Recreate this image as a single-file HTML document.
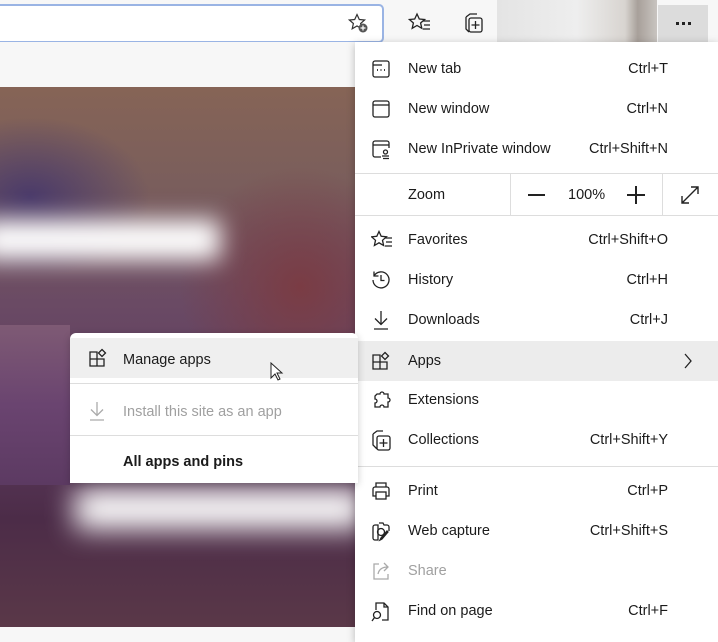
<!DOCTYPE html>
<html><head><meta charset="utf-8"><style>
*{margin:0;padding:0;box-sizing:border-box}
body{width:718px;height:627px;overflow:hidden;position:relative;background:#f7f7f7;font-family:"Liberation Sans",sans-serif;font-size:14.5px;color:#1b1b1b}
.abs{position:absolute}
.bg{left:0;top:87px;width:360px;height:540px;overflow:hidden;background:
radial-gradient(ellipse 120px 80px at 30px 110px,#4a3a6a,rgba(74,58,106,0)),
radial-gradient(ellipse 120px 120px at 300px 200px,#7a3c44,rgba(122,60,68,0)),
linear-gradient(180deg,#866456 0%,#7a5e5c 18%,#6a4a64 40%,#5e3c60 60%,#4c2c48 80%,#5a3848 100%)}
.blur{position:absolute;background:#fff;filter:blur(12px)}
.menu{left:355px;top:42px;width:363px;height:600px;background:#fff;box-shadow:0 2px 8px rgba(0,0,0,.25)}
.row{position:absolute;left:0;width:363px;height:40px;line-height:41px}
.row .t{position:absolute;left:53px}
.row .k{position:absolute;right:50px}
.row svg{position:absolute;left:16px;top:10px}
.hr{position:absolute;left:0;width:363px;height:1px;background:#ddd}
.sub{left:70px;top:333px;width:288px;height:150px;background:#fff;border-radius:6px 6px 0 0;box-shadow:0 2px 8px rgba(0,0,0,.2)}
</style></head><body>
<div class="abs" style="left:0;top:0;width:718px;height:42px;background:#f7f7f7"></div>
<div class="abs" style="left:-10px;top:4px;width:394px;height:39px;background:#fff;border:2px solid #9ab4e4;border-radius:5px"></div>
<svg class="abs" style="left:348px;top:13px" width="24" height="22" viewBox="0 0 24 22" fill="none" stroke="#333" stroke-width="1.2"><path d="M9 1.5l2.3 5 5.3.5-4 3.5 1.2 5.3L9 13l-4.8 2.8 1.2-5.3-4-3.5 5.3-.5z"/><circle cx="15" cy="15" r="4.5" fill="#555" stroke="none"/><path d="M15 12.5v5M12.5 15h5" stroke="#fff"/></svg>
<svg class="abs" style="left:408px;top:12px" width="24" height="22" viewBox="0 0 24 22" fill="none" stroke="#222" stroke-width="1.3"><path d="M9 2l2.3 5 5.3.5-4 3.5 1.2 5.3L9 13.5l-4.8 2.8 1.2-5.3-4-3.5 5.3-.5z"/><path d="M15 9h7M16 13h6M15 17h7"/></svg>
<svg class="abs" style="left:463px;top:12px" width="24" height="24" viewBox="0 0 24 24" fill="none" stroke="#222" stroke-width="1.3"><rect x="6" y="6" width="13" height="14" rx="2"/><path d="M3 5v12l3 3M3 5l4-3h7"/><path d="M12.5 9v8M8.5 13h8"/></svg>
<div class="abs" style="left:497px;top:0;width:160px;height:46px;background:linear-gradient(90deg,#e4e4e4,#eee 50%,#d8d4d0 80%,#a8a09a 88%,#c8c4c0)"></div>
<div class="abs" style="left:658px;top:5px;width:50px;height:37px;background:#dcdcdc"></div>
<div class="abs" style="left:676px;top:22px;width:3px;height:3px;background:#222"></div>
<div class="abs" style="left:682px;top:22px;width:3px;height:3px;background:#222"></div>
<div class="abs" style="left:688px;top:22px;width:3px;height:3px;background:#222"></div>
<div class="abs" style="left:0;top:42px;width:360px;height:45px;background:#f7f7f7"></div>
<div class="abs bg">
<div class="blur" style="left:-20px;top:133px;width:240px;height:40px"></div>
<div class="blur" style="left:75px;top:402px;width:290px;height:40px;filter:blur(14px)"></div>
</div>
<div class="abs" style="left:0;top:325px;width:70px;height:160px;background:linear-gradient(180deg,#7e5a74,#6a4470 50%,#5c3a62)"></div>

<div class="abs menu">
<div class="row" style="top:7px"><svg width="20" height="20" viewBox="0 0 20 20" fill="none" stroke="#222" stroke-width="1.3"><rect x="2" y="2" width="16" height="16" rx="2"/><path d="M2 6h9"/><path d="M6 11h1M9.5 11h1M13 11h1" stroke-width="1.8"/></svg><span class="t">New tab</span><span class="k">Ctrl+T</span></div>
<div class="row" style="top:47px"><svg width="20" height="20" viewBox="0 0 20 20" fill="none" stroke="#222" stroke-width="1.3"><rect x="2" y="2" width="16" height="16" rx="2"/><path d="M2 6h16"/></svg><span class="t">New window</span><span class="k">Ctrl+N</span></div>
<div class="row" style="top:87px"><svg width="20" height="22" viewBox="0 0 20 22" fill="none" stroke="#222" stroke-width="1.3"><path d="M10 18H4a2 2 0 0 1-2-2V4a2 2 0 0 1 2-2h12a2 2 0 0 1 2 2v5"/><path d="M2 6h16"/><circle cx="14.5" cy="13" r="2"/><path d="M11 17h7M12 19.5h6"/></svg><span class="t">New InPrivate window</span><span class="k">Ctrl+Shift+N</span></div>
<div class="hr" style="top:131px"></div>
<div class="row" style="top:132px;height:41px;line-height:42px"><span class="t">Zoom</span>
<div class="abs" style="left:155px;top:0;width:1px;height:41px;background:#ddd"></div>
<div class="abs" style="left:173px;top:20px;width:17px;height:1.5px;background:#222"></div>
<span class="abs" style="left:213px">100%</span>
<div class="abs" style="left:272px;top:20px;width:18px;height:1.5px;background:#222"></div>
<div class="abs" style="left:280px;top:12px;width:1.5px;height:18px;background:#222"></div>
<div class="abs" style="left:307px;top:0;width:1px;height:41px;background:#ddd"></div>
<svg class="abs" style="left:325px;top:11px" width="20" height="20" viewBox="0 0 20 20" fill="none" stroke="#222" stroke-width="1.4"><path d="M2 18L18 2M11 2h7v7M2 11v7h7"/></svg></div>
<div class="hr" style="top:173px"></div>
<div class="row" style="top:178px"><svg width="22" height="20" viewBox="0 0 22 20" fill="none" stroke="#222" stroke-width="1.3"><path d="M8 1.5l2.2 4.8 5.2.5-3.9 3.5 1.1 5.2L8 12.8l-4.6 2.7 1.1-5.2L.6 6.8l5.2-.5z"/><path d="M14 8h7M15 12h6M14 16h7"/></svg><span class="t">Favorites</span><span class="k">Ctrl+Shift+O</span></div>
<div class="row" style="top:218px"><svg width="20" height="20" viewBox="0 0 20 20" fill="none" stroke="#222" stroke-width="1.3"><path d="M3 6A8 8 0 1 1 2 10"/><path d="M3 1.5V6h4.5"/><path d="M10 5v5.5h3.5"/></svg><span class="t">History</span><span class="k">Ctrl+H</span></div>
<div class="row" style="top:258px"><svg width="20" height="20" viewBox="0 0 20 20" fill="none" stroke="#222" stroke-width="1.3"><path d="M10 1v13M4 8.5l6 6 6-6M3 19h14"/></svg><span class="t">Downloads</span><span class="k">Ctrl+J</span></div>
<div class="row" style="top:299px;background:#ececec"><svg width="20" height="20" viewBox="0 0 20 20" fill="none" stroke="#222" stroke-width="1.3"><path d="M2 4h7v14H2zM2 11h14v7H9"/><path d="M14 1.5l3.5 3.5-3.5 3.5-3.5-3.5z"/></svg><span class="t">Apps</span><svg style="left:328px;top:12px" width="10" height="16" viewBox="0 0 10 16" fill="none" stroke="#222" stroke-width="1.3"><path d="M2 1l6 7-6 7"/></svg></div>
<div class="row" style="top:338px"><svg width="20" height="22" viewBox="0 0 20 22" fill="none" stroke="#222" stroke-width="1.3"><path d="M6 4h3a2 2 0 1 1 4 0h4v4a2 2 0 1 1 0 4v5h-4a2 2 0 1 0-4 0H4v-4a2 2 0 1 0 0-4V6z"/></svg><span class="t">Extensions</span></div>
<div class="row" style="top:378px"><svg width="22" height="22" viewBox="0 0 22 22" fill="none" stroke="#222" stroke-width="1.3"><rect x="6" y="6" width="13" height="14" rx="2"/><path d="M2 4v11l4 4M2 4l4-3h6"/><path d="M12.5 9v8M8.5 13h8"/></svg><span class="t">Collections</span><span class="k">Ctrl+Shift+Y</span></div>
<div class="hr" style="top:424px"></div>
<div class="row" style="top:429px"><svg width="20" height="20" viewBox="0 0 20 20" fill="none" stroke="#222" stroke-width="1.3"><path d="M5 6V2h10v4M5 15H2V8a2 2 0 0 1 2-2h12a2 2 0 0 1 2 2v7h-3"/><rect x="5" y="11" width="10" height="7"/></svg><span class="t">Print</span><span class="k">Ctrl+P</span></div>
<div class="row" style="top:469px"><svg width="20" height="22" viewBox="0 0 20 22" fill="none" stroke="#222" stroke-width="1.3"><path d="M8 2h4l1 2h3a2 2 0 0 1 2 2v4M7 19H4a2 2 0 0 1-2-2V6a2 2 0 0 1 2-2h3z"/><circle cx="10" cy="11" r="3.5"/><path d="M17 11l-6 7 -2 1 1-2 6-7z" fill="#222"/></svg><span class="t">Web capture</span><span class="k">Ctrl+Shift+S</span></div>
<div class="row" style="top:509px;color:#a0a0a0"><svg width="20" height="20" viewBox="0 0 20 20" fill="none" stroke="#aaa" stroke-width="1.3"><path d="M8 3H3v15h14v-5"/><path d="M7 13c1-5 5-7 10-7M13 2l4 4-4 4"/></svg><span class="t">Share</span></div>
<div class="row" style="top:549px"><svg width="20" height="22" viewBox="0 0 20 22" fill="none" stroke="#222" stroke-width="1.3"><path d="M5 9V2h8l4 4v13h-6"/><path d="M13 2v4h4"/><circle cx="6" cy="14" r="3.5"/><path d="M3.5 16.5L1 20"/></svg><span class="t">Find on page</span><span class="k">Ctrl+F</span></div>
</div>

<div class="abs sub">
<div class="abs" style="left:0;top:5px;width:288px;height:40px;background:#efefef"></div>
<svg class="abs" style="left:18px;top:15px" width="20" height="20" viewBox="0 0 20 20" fill="none" stroke="#222" stroke-width="1.3"><path d="M2 4h7v14H2zM2 11h14v7H9"/><path d="M14 1.5l3.5 3.5-3.5 3.5-3.5-3.5z"/></svg>
<span class="abs" style="left:53px;top:19px">Manage apps</span>
<svg class="abs" style="left:200px;top:29px" width="14" height="20" viewBox="0 0 14 20"><path d="M1 1v15l4-4 3 6 2-1-3-6h5z" fill="#fff" stroke="#222" stroke-width="1"/></svg>
<div class="abs" style="left:0;top:50px;width:288px;height:1px;background:#ddd"></div>
<svg class="abs" style="left:18px;top:68px" width="18" height="20" viewBox="0 0 18 20" fill="none" stroke="#aaa" stroke-width="1.3"><path d="M9 1v13M3 8.5l6 6 6-6M2 19h14"/></svg>
<span class="abs" style="left:53px;top:71px;color:#a0a0a0">Install this site as an app</span>
<div class="abs" style="left:0;top:102px;width:288px;height:1px;background:#ddd"></div>
<span class="abs" style="left:53px;top:121px;font-weight:bold">All apps and pins</span>
</div>
</body></html>
